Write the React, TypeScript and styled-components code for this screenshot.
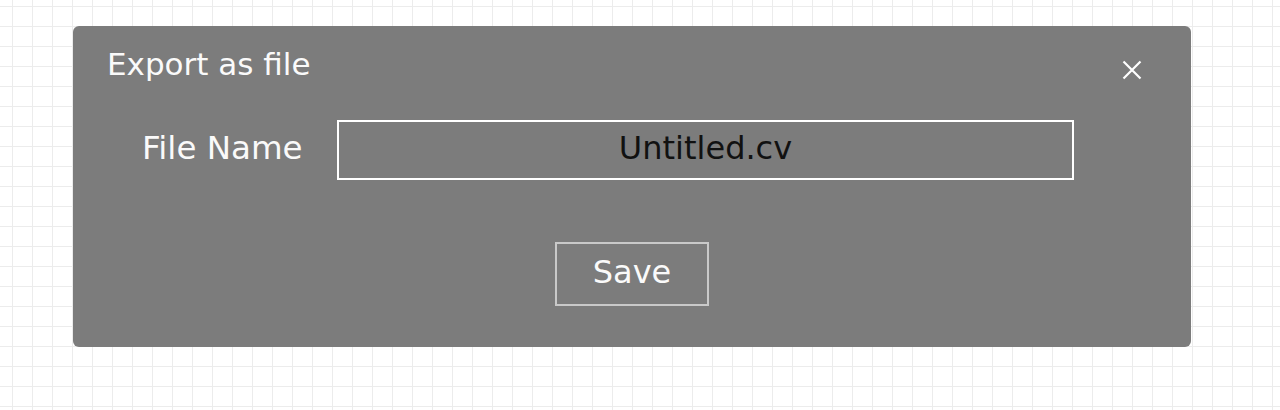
import React, { FC } from "react";
import styled, { createGlobalStyle } from "styled-components";

const GlobalStyle = createGlobalStyle`
  html, body {
    margin: 0;
    padding: 0;
  }
  body {
    font-family: "DejaVu Sans", "Liberation Sans", sans-serif;
  }
  * {
    box-sizing: border-box;
  }
`;

const Page = styled.div`
  min-height: 410px;
  padding: 26px 0 0 73px;
  background-color: #fff;
  background-image: linear-gradient(to right, #ececec 1px, transparent 1px),
    linear-gradient(to bottom, #ececec 1px, transparent 1px);
  background-size: 20px 20px;
  background-position: 12px 6px;
`;

const Dialog = styled.div`
  width: 1118px;
  padding: 20px 32px 41px;
  background: #7c7c7c;
  border-radius: 6px;
  display: flex;
  flex-direction: column;
`;

const Header = styled.div`
  height: 36px;
  display: flex;
  justify-content: space-between;
  align-items: flex-start;
`;

const Title = styled.h2`
  margin: 0 0 0 2px;
  color: #fafafa;
  font-size: 31px;
  font-weight: 400;
  line-height: 36px;
`;

const CloseButton = styled.button`
  width: 30px;
  height: 30px;
  margin: 9px 12px 0 0;
  padding: 0;
  border: none;
  background: transparent;
  display: flex;
  align-items: center;
  justify-content: center;
  cursor: pointer;
`;

const Row = styled.div`
  margin-top: 38px;
  padding-left: 37px;
  display: flex;
  align-items: center;
`;

const Label = styled.label`
  width: 195px;
  flex-shrink: 0;
  color: #fafafa;
  font-size: 32.5px;
  line-height: 37px;
  padding-bottom: 4px;
`;

const NameInput = styled.input`
  width: 737px;
  height: 60px;
  padding: 0 0 4px;
  border: 2px solid #fff;
  background: transparent;
  color: #111;
  font-family: "DejaVu Sans", "Liberation Sans", sans-serif;
  font-size: 32px;
  text-align: center;
  outline: none;
`;

const Footer = styled.div`
  margin-top: 62px;
  display: flex;
  justify-content: center;
`;

const SaveButton = styled.button`
  width: 154px;
  height: 64px;
  padding: 0 0 4px;
  border: 2px solid #c9c9c9;
  background: transparent;
  color: #fafafa;
  font-family: "DejaVu Sans", "Liberation Sans", sans-serif;
  font-size: 32px;
  cursor: pointer;
`;

const App: FC = () => {
  return (
    <>
      <GlobalStyle />
      <Page>
        <Dialog>
          <Header>
            <Title>Export as file</Title>
            <CloseButton aria-label="Close">
              <svg width="20" height="20" viewBox="0 0 20 20">
                <path
                  d="M1.5 1.5 L18.5 18.5 M18.5 1.5 L1.5 18.5"
                  stroke="#fff"
                  strokeWidth="2.2"
                  fill="none"
                />
              </svg>
            </CloseButton>
          </Header>
          <Row>
            <Label htmlFor="file-name">File Name</Label>
            <NameInput id="file-name" defaultValue="Untitled.cv" />
          </Row>
          <Footer>
            <SaveButton>Save</SaveButton>
          </Footer>
        </Dialog>
      </Page>
    </>
  );
};

export default App;
